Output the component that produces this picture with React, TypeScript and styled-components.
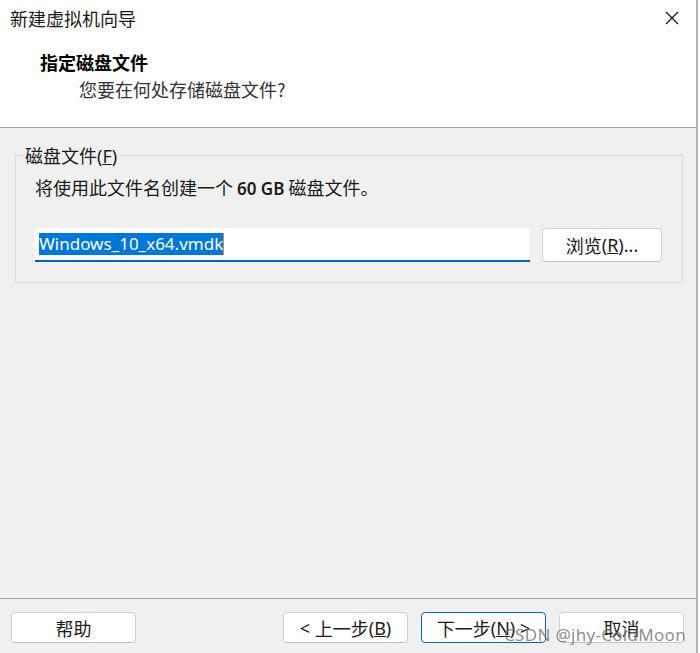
import styled, { createGlobalStyle } from 'styled-components';

const GlobalStyle = createGlobalStyle`
  html, body {
    margin: 0;
    padding: 0;
    background: #ffffff;
  }
  body {
    font-family: "Noto Sans", "Noto Sans CJK SC", sans-serif;
  }
`;

const CJK = `"Noto Sans CJK SC", "Noto Sans", sans-serif`;
const LATIN = `"Noto Sans", "Noto Sans CJK SC", sans-serif`;

const Window = styled.div`
  position: relative;
  width: 696px;
  height: 653px;
  display: flex;
  flex-direction: column;
  background: #f0f0f0;
  border-right: 2px solid #b4b4b4;
  border-top-left-radius: 6px;
  overflow: hidden;
`;

const Header = styled.header`
  height: 127px;
  background: #ffffff;
  border-bottom: 1px solid #a0a0a0;
  display: flex;
  flex-direction: column;
`;

const TitleBar = styled.div`
  height: 36px;
  display: flex;
  align-items: center;
  justify-content: space-between;
  padding: 0 16px 0 10px;
`;

const Title = styled.div`
  font-family: ${CJK};
  font-size: 18px;
  color: #1a1a1a;
`;

const CloseIcon = styled.svg`
  width: 16px;
  height: 16px;
`;

const Heading = styled.div`
  font-family: ${CJK};
  font-size: 18px;
  font-weight: 700;
  color: #000;
  line-height: 22px;
  margin: 15px 0 0 40px;
`;

const SubHeading = styled.div`
  font-family: ${CJK};
  font-size: 18px;
  color: #333;
  line-height: 22px;
  margin: 5px 0 0 79px;
`;

const Body = styled.main`
  flex: 1;
  padding: 16px 13px 0 15px;
`;

const Group = styled.fieldset`
  margin: 0;
  padding: 0 20px 20px 19px;
  border: 1px solid #dcdcdc;
  min-width: 0;
`;

const Legend = styled.legend`
  font-family: ${CJK};
  font-size: 18px;
  line-height: 22px;
  color: #1a1a1a;
  padding: 0 1px;
  margin-left: -11px;
`;

const Info = styled.div`
  font-family: ${CJK};
  font-size: 18px;
  line-height: 22px;
  color: #1a1a1a;
  margin-top: 9px;
`;

const Strong = styled.span`
  font-family: ${LATIN};
  font-weight: 600;
  font-size: 17px;
  margin: 0 4px;
`;

const InputRow = styled.div`
  display: flex;
  align-items: center;
  gap: 12px;
  margin-top: 28px;
`;

const PathField = styled.div`
  width: 495px;
  height: 34px;
  box-sizing: border-box;
  background: #ffffff;
  border-bottom: 2px solid #0067c0;
  display: flex;
  align-items: center;
  padding-left: 4px;
`;

const Selected = styled.span`
  font-family: ${LATIN};
  font-size: 17px;
  line-height: 22px;
  background: #0078d7;
  color: #ffffff;
  border-right: 1px solid #e08a3c;
`;

const Button = styled.button<{ $primary?: boolean; $w?: number }>`
  width: ${({ $w }) => $w ?? 125}px;
  height: 31px;
  box-sizing: border-box;
  background: #ffffff;
  border: 1px solid ${({ $primary }) => ($primary ? '#0067c0' : '#d2d2d2')};
  border-bottom-color: ${({ $primary }) => ($primary ? '#0067c0' : '#c2c2c2')};
  border-radius: 4px;
  font-family: ${CJK};
  font-size: 18px;
  color: #1a1a1a;
  padding: 0;
  display: flex;
  align-items: center;
  justify-content: center;
`;

const Browse = styled(Button)`
  height: 34px;
`;

const Lat = styled.span`
  font-family: ${LATIN};
`;

const Footer = styled.footer`
  height: 55px;
  box-sizing: border-box;
  border-top: 1px solid #a8a8a8;
  display: flex;
  align-items: flex-start;
  padding: 13px 12px 0 11px;
  gap: 13px;
`;

const Spacer = styled.div`
  flex: 1;
`;

const Watermark = styled.div`
  position: absolute;
  right: 10px;
  bottom: 7px;
  font-family: ${LATIN};
  font-size: 17px;
  letter-spacing: 0.3px;
  color: rgba(120, 120, 120, 0.85);
  pointer-events: none;
`;

export default function App() {
  return (
    <>
      <GlobalStyle />
      <Window>
        <Header>
          <TitleBar>
            <Title>新建虚拟机向导</Title>
            <CloseIcon viewBox="0 0 16 16">
              <path d="M2 2 L14 14 M14 2 L2 14" stroke="#111" strokeWidth="1.2" fill="none" />
            </CloseIcon>
          </TitleBar>
          <Heading>指定磁盘文件</Heading>
          <SubHeading>您要在何处存储磁盘文件?</SubHeading>
        </Header>
        <Body>
          <Group>
            <Legend>
              磁盘文件<Lat>(<u>F</u>)</Lat>
            </Legend>
            <Info>
              将使用此文件名创建一个<Strong>60 GB</Strong>磁盘文件。
            </Info>
            <InputRow>
              <PathField>
                <Selected>Windows_10_x64.vmdk</Selected>
              </PathField>
              <Browse $w={120}>
                浏览<Lat>(<u>R</u>)...</Lat>
              </Browse>
            </InputRow>
          </Group>
        </Body>
        <Footer>
          <Button>帮助</Button>
          <Spacer />
          <Button>
            <Lat>&lt;&nbsp;</Lat>上一步<Lat>(<u>B</u>)</Lat>
          </Button>
          <Button $primary>
            下一步<Lat>(<u>N</u>)&nbsp;&gt;</Lat>
          </Button>
          <Button>取消</Button>
        </Footer>
        <Watermark>CSDN @jhy-ColdMoon</Watermark>
      </Window>
    </>
  );
}
